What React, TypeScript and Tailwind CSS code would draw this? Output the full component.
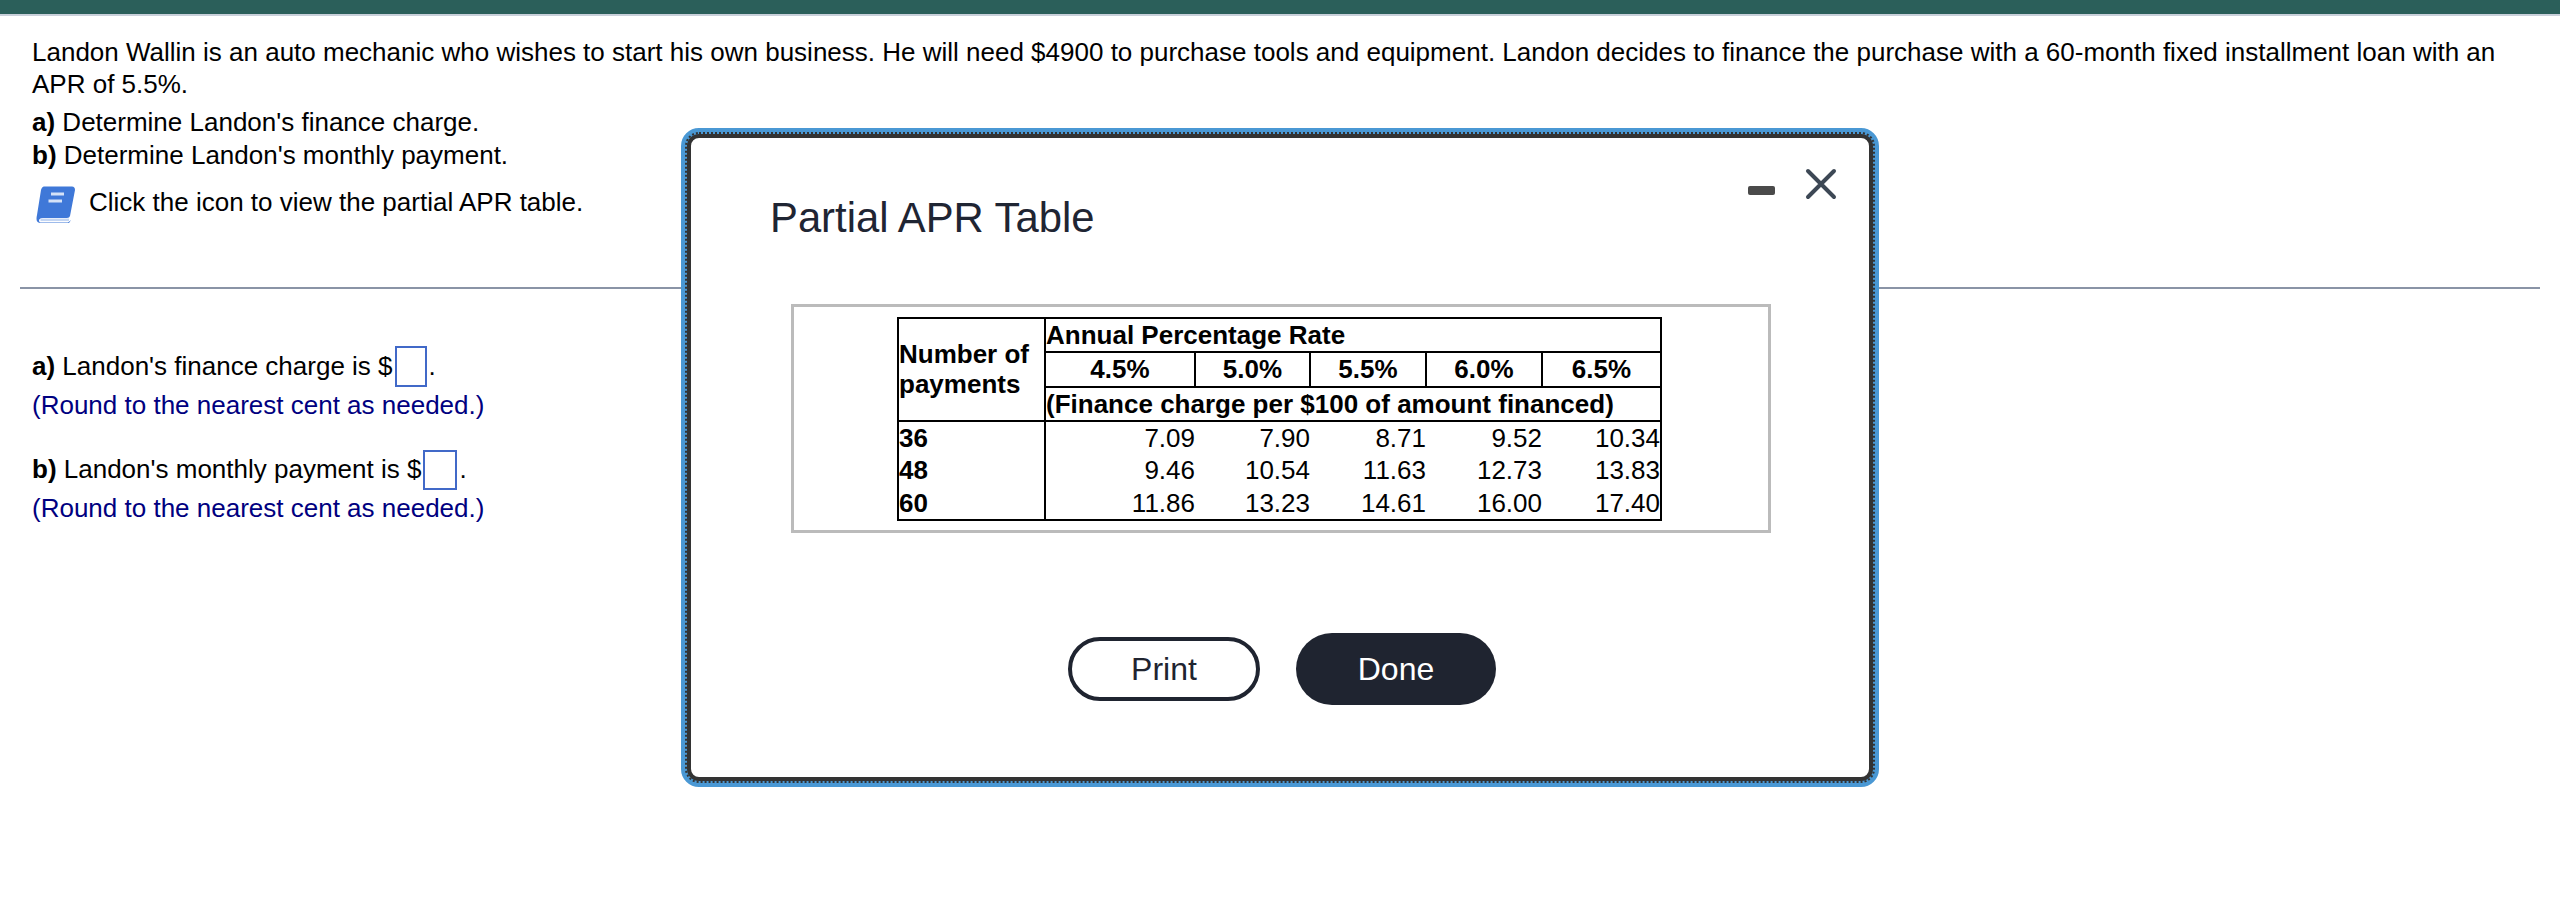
const rows = [
  ["36", "7.09", "7.90", "8.71", "9.52", "10.34"],
  ["48", "9.46", "10.54", "11.63", "12.73", "13.83"],
  ["60", "11.86", "13.23", "14.61", "16.00", "17.40"],
]

function BookIcon() {
  return (
    <svg width="40" height="38" viewBox="0 0 40 38" className="shrink-0">
      <path d="M8 .5H36Q39 .5 39 4L34 30Q33.500 32 31 32H7Q3 32 3 34.500T7 36.500H32L35 34 33 37H5Q.5 37 .5 33Q.5 31 1 29L5 4Q6 .5 8 .5Z" fill="#3f78d8" />
      <path d="M4.500 33.800H33" stroke="#c4d6f3" strokeWidth="2.500" />
      <path d="M15 8h13M12.500 15h13.500" stroke="#d5e2f7" strokeWidth="3" />
    </svg>
  )
}

function PartialAprTable() {
  return (
    <table className="w-[763px] table-fixed border-collapse border-2 border-black font-['Liberation_Sans',sans-serif] text-[26px] leading-[30px] text-black">
      <colgroup>
        <col className="w-[147px]" />
        <col className="w-[150px]" />
        <col className="w-[115px]" />
        <col className="w-[116px]" />
        <col className="w-[116px]" />
        <col className="w-[119px]" />
      </colgroup>
      <tbody>
        <tr className="h-[34px]">
          <th rowSpan={3} className="border-2 border-black p-0 text-left font-bold">
            Number of payments
          </th>
          <th colSpan={5} className="border-2 border-black p-0 text-left font-bold">
            Annual Percentage Rate
          </th>
        </tr>
        <tr className="h-[35px]">
          {["4.5%", "5.0%", "5.5%", "6.0%", "6.5%"].map((rate) => (
            <th key={rate} className="border-2 border-black p-0 text-center font-bold">
              {rate}
            </th>
          ))}
        </tr>
        <tr className="h-[34px]">
          <th colSpan={5} className="border-2 border-black p-0 text-left font-bold">
            (Finance charge per $100 of amount financed)
          </th>
        </tr>
        {rows.map((row) => (
          <tr key={row[0]} className="h-[33px]">
            <td className="border-x-2 border-black p-0 font-bold">{row[0]}</td>
            {row.slice(1).map((value, i) => (
              <td key={i} className={`p-0 text-right ${i === 0 ? "border-l-2 border-black" : ""}`}>
                {value}
              </td>
            ))}
          </tr>
        ))}
      </tbody>
    </table>
  )
}

function AprModal() {
  return (
    <div className="absolute left-[681px] top-[128px] h-[659px] w-[1198px] rounded-[18px] border-4 border-[#4a98d4] bg-[#4a98d4]">
      <div className="h-full rounded-[14px] border-2 border-dotted border-[#333333]">
        <div className="relative flex h-full flex-col rounded-[12px] border-4 border-[#333333] bg-white pl-[79px] pt-[53px]">
          <div className="absolute right-[94px] top-[48px] h-[9px] w-[27px] rounded-[2px] bg-[#4a4a4a]" />
          <svg width="32" height="32" viewBox="0 0 32 32" className="absolute right-[32px] top-[30px]">
            <path d="M3 3l26 26M29 3L3 29" stroke="#3d4855" strokeWidth="4" strokeLinecap="round" />
          </svg>
          <h2 className="text-[41.800px] font-normal leading-[54px] text-[#1f2533]">Partial APR Table</h2>
          <div className="ml-[21px] mt-[59px] flex h-[229px] w-[980px] items-center border-[3px] border-[#bbbbbb] pl-[103px]">
            <PartialAprTable />
          </div>
          <div className="ml-[298px] mt-[100px] flex items-center gap-9 text-[32px]">
            <button className="h-[64px] w-[192px] rounded-full border-4 border-[#1f2430] bg-white text-[#1f2430]">Print</button>
            <button className="h-[72px] w-[200px] rounded-full bg-[#1f2430] text-white">Done</button>
          </div>
        </div>
      </div>
    </div>
  )
}

export default function App() {
  return (
    <div className="relative h-[904px] overflow-hidden bg-white font-['Liberation_Sans',sans-serif] text-[26px] leading-[32px] text-black">
      <div className="h-4 border-b-2 border-[#c9d0da] bg-[#2b5f5a]" />

      <div className="px-8 pt-[20px]">
        <p>
          Landon Wallin is an auto mechanic who wishes to start his own business. He will need $4900 to purchase tools and equipment. Landon decides to finance the purchase with a 60-month fixed installment loan with an APR of 5.5%.
        </p>
        <p className="mt-[6px] leading-[33px]"><b>a)</b> Determine Landon's finance charge.</p>
        <p className="leading-[33px]"><b>b)</b> Determine Landon's monthly payment.</p>
        <div className="mt-[14px] flex items-center gap-[13px] pl-[4px]">
          <BookIcon />
          <span className="mb-[6px]">Click the icon to view the partial APR table.</span>
        </div>
      </div>

      <div className="mx-5 mt-[63px] h-0.5 bg-[#8a94a6]" />

      <div className="px-8 pt-[57px]">
        <p className="flex items-center leading-[41px]">
          <b>a)</b>&nbsp;Landon's finance charge is $
          <span className="mx-[2px] h-[41px] w-[32px] border-2 border-[#4169c8]" />.
        </p>
        <p className="mt-[2px] text-[#000080]">(Round to the nearest cent as needed.)</p>
        <p className="mt-[28px] flex items-center leading-[41px]">
          <b>b)</b>&nbsp;Landon's monthly payment is $
          <span className="mx-[2px] h-[40px] w-[34px] border-2 border-[#4169c8]" />.
        </p>
        <p className="mt-[2px] text-[#000080]">(Round to the nearest cent as needed.)</p>
      </div>

      <AprModal />
    </div>
  )
}
